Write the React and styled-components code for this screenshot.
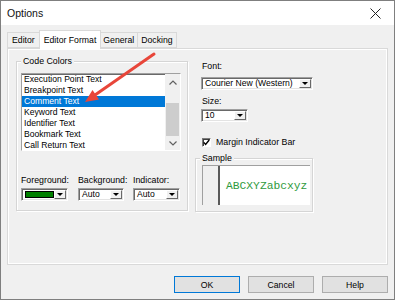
import styled, { createGlobalStyle } from "styled-components";

const GlobalStyle = createGlobalStyle`
  html, body {
    margin: 0;
    padding: 0;
    background: #ffffff;
  }
  * {
    box-sizing: border-box;
  }
`;

const codeColors = [
  "Execution Point Text",
  "Breakpoint Text",
  "Comment Text",
  "Keyword Text",
  "Identifier Text",
  "Bookmark Text",
  "Call Return Text",
];

const tabs = ["Editor", "Editor Format", "General", "Docking"];

export default function App() {
  return (
    <>
      <GlobalStyle />
      <Window>
        <TitleBar>
          <Title>Options</Title>
          <CloseButton>
            <svg width="11" height="11" viewBox="0 0 11 11">
              <path d="M0.5 0.5 L10.5 10.5 M10.5 0.5 L0.5 10.5" stroke="#222" strokeWidth="1" />
            </svg>
          </CloseButton>
        </TitleBar>

        <Body>
          <TabStrip>
            {tabs.map((t) => (
              <Tab key={t} $active={t === "Editor Format"}>
                {t}
              </Tab>
            ))}
          </TabStrip>

          <TabPanel>
            <GroupBox $width={172} $height={150} $pad="11px 0 0 4px">
              <Caption>Code Colors</Caption>
              <ListBox>
                <ListItems>
                  {codeColors.map((c) => (
                    <ListItem key={c} $selected={c === "Comment Text"}>
                      {c}
                    </ListItem>
                  ))}
                </ListItems>
                <ScrollBar>
                  <ScrollArrow $h={16}>
                    <svg width="8" height="5" viewBox="0 0 8 5">
                      <polyline points="0.5,4.5 4,1 7.5,4.5" fill="none" stroke="#606060" strokeWidth="1.2" />
                    </svg>
                  </ScrollArrow>
                  <ScrollTrack>
                    <ScrollThumb />
                  </ScrollTrack>
                  <ScrollArrow $h={14}>
                    <svg width="8" height="5" viewBox="0 0 8 5">
                      <polyline points="0.5,0.5 4,4 7.5,0.5" fill="none" stroke="#606060" strokeWidth="1.2" />
                    </svg>
                  </ScrollArrow>
                </ScrollBar>
              </ListBox>

              <ColorRow>
                <ColorField $width={48}>
                  <FieldLabel>Foreground:</FieldLabel>
                  <Combo $width={47}>
                    <ComboValue>
                      <Swatch />
                    </ComboValue>
                    <DropButton />
                  </Combo>
                </ColorField>
                <ColorField $width={46}>
                  <FieldLabel>Background:</FieldLabel>
                  <Combo $width={46}>
                    <ComboValue>Auto</ComboValue>
                    <DropButton />
                  </Combo>
                </ColorField>
                <ColorField $width={47}>
                  <FieldLabel>Indicator:</FieldLabel>
                  <Combo $width={47}>
                    <ComboValue>Auto</ComboValue>
                    <DropButton />
                  </Combo>
                </ColorField>
              </ColorRow>
            </GroupBox>

            <RightColumn>
              <FieldLabel $indent={7} $top={0}>Font:</FieldLabel>
              <Combo $width={112} $indent={6} $top={5}>
                <ComboValue>Courier New (Western)</ComboValue>
                <DropButton />
              </Combo>
              <FieldLabel $indent={7} $top={6}>Size:</FieldLabel>
              <Combo $width={47} $indent={6} $top={2}>
                <ComboValue>10</ComboValue>
                <DropButton />
              </Combo>
              <CheckRow>
                <CheckBox>
                  <svg width="7" height="7" viewBox="0 0 7 7">
                    <polyline points="0.8,3.4 2.6,5.4 6.2,1" fill="none" stroke="#000" strokeWidth="1.4" />
                  </svg>
                </CheckBox>
                <span>Margin Indicator Bar</span>
              </CheckRow>
              <GroupBox $width={118} $height={54} $pad="6px 0 0 6px" $top={11}>
                <Caption>Sample</Caption>
                <SampleArea>
                  <SampleMargin />
                  <SampleText>ABCXYZabcxyz</SampleText>
                </SampleArea>
              </GroupBox>
            </RightColumn>
          </TabPanel>

          <ButtonRow>
            <Button $default>OK</Button>
            <Button>Cancel</Button>
            <Button>Help</Button>
          </ButtonRow>
        </Body>

        <Annotation width="395" height="300" viewBox="0 0 395 300">
          <line x1="154" y1="54" x2="95" y2="95" stroke="#e8463a" strokeWidth="3" strokeLinecap="round" />
          <polygon points="85,102 99,99.5 92.5,90" fill="#e8463a" />
        </Annotation>
      </Window>
    </>
  );
}

const Window = styled.div`
  position: relative;
  width: 395px;
  height: 300px;
  border: 1px solid #7f7f7f;
  background: #f0f0f0;
  font-family: "Liberation Sans", Arial, sans-serif;
  font-size: 8.7px;
  color: #000;
  overflow: hidden;
`;

const TitleBar = styled.div`
  display: flex;
  align-items: center;
  height: 24px;
  background: #ffffff;
  padding-left: 6px;
`;

const Title = styled.span`
  font-size: 10.5px;
  color: #111;
`;

const CloseButton = styled.div`
  margin-left: auto;
  width: 30px;
  height: 24px;
  display: flex;
  align-items: center;
  justify-content: center;
  margin-right: 4px;
`;

const Body = styled.div`
  display: flex;
  flex-direction: column;
  padding: 5px 6px 0 6px;
`;

const TabStrip = styled.div`
  display: flex;
  align-items: flex-end;
  height: 18px;
  position: relative;
  z-index: 1;
`;

const Tab = styled.div`
  height: ${(p) => (p.$active ? "19px" : "16px")};
  padding: 0 ${(p) => (p.$active ? "4px" : "3px")};
  margin: 0 ${(p) => (p.$active ? "-1px" : "0")};
  display: flex;
  align-items: center;
  justify-content: center;
  background: ${(p) => (p.$active ? "#ffffff" : "#f0f0f0")};
  border: 1px solid #d9d9d9;
  border-bottom: ${(p) => (p.$active ? "none" : "1px solid #d9d9d9")};
  border-left: ${(p) => (p.$active ? "1px solid #d9d9d9" : "none")};
  font-size: 8.7px;
  &:first-child {
    border-left: 1px solid #d9d9d9;
    padding: 0 4px;
  }
  margin-bottom: ${(p) => (p.$active ? "-1px" : "0")};
  z-index: ${(p) => (p.$active ? 2 : 1)};
`;

const TabPanel = styled.div`
  display: flex;
  align-items: flex-start;
  gap: 7px;
  height: 217px;
  border: 1px solid #d9d9d9;
  box-shadow: inset 1px 1px #ffffff, inset -1px -1px #ffffff;
  padding: 12px 0 0 8px;
  background: #f0f0f0;
`;

const GroupBox = styled.div`
  position: relative;
  width: ${(p) => p.$width}px;
  height: ${(p) => p.$height}px;
  margin-top: ${(p) => p.$top || 0}px;
  border: 1px solid #d5d5d5;
  box-shadow: inset 1px 1px #ffffff, 1px 1px #ffffff;
  padding: ${(p) => p.$pad};
  display: flex;
  flex-direction: column;
`;

const Caption = styled.span`
  position: absolute;
  top: -6px;
  left: 4px;
  padding: 0 2px;
  line-height: 11px;
  font-size: 8.8px;
  background: #f0f0f0;
`;

const ListBox = styled.div`
  display: flex;
  width: 160px;
  height: 78px;
  background: #ffffff;
  border: 1px solid;
  border-color: #a0a0a0 #ffffff #ffffff #a0a0a0;
  box-shadow: inset 0 1px #696969;
  overflow: hidden;
`;

const ListItems = styled.div`
  flex: 1;
  display: flex;
  flex-direction: column;
`;

const ListItem = styled.div`
  height: 11px;
  line-height: 11px;
  padding-left: 2px;
  font-size: 8.6px;
  white-space: nowrap;
  background: ${(p) => (p.$selected ? "#0078d7" : "transparent")};
  color: ${(p) => (p.$selected ? "#ffffff" : "#000")};
`;

const ScrollBar = styled.div`
  width: 15px;
  display: flex;
  flex-direction: column;
  background: #f0f0f0;
`;

const ScrollArrow = styled.div`
  height: ${(p) => p.$h}px;
  display: flex;
  align-items: center;
  justify-content: center;
`;

const ScrollTrack = styled.div`
  flex: 1;
  padding: 13px 1px 0 1px;
`;

const ScrollThumb = styled.div`
  height: 33px;
  background: #cdcdcd;
`;

const ColorRow = styled.div`
  display: flex;
  gap: 9px;
  margin-top: 24px;
`;

const ColorField = styled.div`
  width: ${(p) => p.$width}px;
  display: flex;
  flex-direction: column;
  gap: 2px;
`;

const FieldLabel = styled.span`
  display: block;
  height: 11px;
  line-height: 11px;
  font-size: 8.8px;
  margin-left: ${(p) => p.$indent || 0}px;
  margin-top: ${(p) => p.$top || 0}px;
  white-space: nowrap;
`;

const Combo = styled.div`
  display: flex;
  width: ${(p) => p.$width}px;
  height: 13px;
  margin-left: ${(p) => p.$indent || 0}px;
  margin-top: ${(p) => p.$top || 0}px;
  background: #ffffff;
  border: 1px solid;
  border-color: #a0a0a0 #ffffff #ffffff #a0a0a0;
  box-shadow: inset 1px 1px #696969, inset -1px -1px #e3e3e3;
`;

const ComboValue = styled.div`
  flex: 1;
  display: flex;
  align-items: center;
  padding-left: 3px;
  font-size: 8.6px;
  line-height: 11px;
  white-space: nowrap;
  overflow: hidden;
`;

const DropButton = styled.div`
  width: 12px;
  margin: 1px 1px 1px 0;
  background: #f0f0f0;
  border: 1px solid;
  border-color: #ffffff #696969 #696969 #ffffff;
  display: flex;
  align-items: center;
  justify-content: center;
  &::after {
    content: "";
    border-left: 3px solid transparent;
    border-right: 3px solid transparent;
    border-top: 3px solid #000;
  }
`;

const Swatch = styled.div`
  width: 29px;
  height: 7px;
  background: #008000;
  border: 1px solid #000;
`;

const RightColumn = styled.div`
  display: flex;
  flex-direction: column;
  padding-top: 0;
`;

const CheckRow = styled.div`
  display: flex;
  align-items: center;
  gap: 5px;
  margin-top: 15px;
  margin-left: 7px;
  height: 10px;
  font-size: 8.8px;
  white-space: nowrap;
`;

const CheckBox = styled.div`
  width: 9px;
  height: 9px;
  background: #ffffff;
  border: 1px solid;
  border-color: #7a7a7a #ffffff #ffffff #7a7a7a;
  box-shadow: inset 1px 1px #404040;
  display: flex;
  align-items: center;
  justify-content: center;
`;

const SampleArea = styled.div`
  display: flex;
  width: 108px;
  height: 40px;
  background: #ffffff;
  border-top: 1px solid #a0a0a0;
  border-left: 1px solid #a0a0a0;
`;

const SampleMargin = styled.div`
  width: 17px;
  background: #f0f0f0;
  border-right: 2px solid #5a5a5a;
`;

const SampleText = styled.div`
  display: flex;
  align-items: center;
  padding-left: 6px;
  font-family: "Liberation Mono", "Courier New", monospace;
  font-size: 11.3px;
  color: #2f9a3d;
  white-space: nowrap;
`;

const ButtonRow = styled.div`
  display: flex;
  justify-content: flex-end;
  gap: 8px;
  margin-top: 11px;
`;

const Button = styled.div`
  width: 66px;
  height: 17px;
  display: flex;
  align-items: center;
  justify-content: center;
  background: #e1e1e1;
  border: 1px solid ${(p) => (p.$default ? "#0078d7" : "#adadad")};
  font-size: 8.7px;
`;

const Annotation = styled.svg`
  position: absolute;
  left: -1px;
  top: -1px;
  pointer-events: none;
  z-index: 5;
`;
